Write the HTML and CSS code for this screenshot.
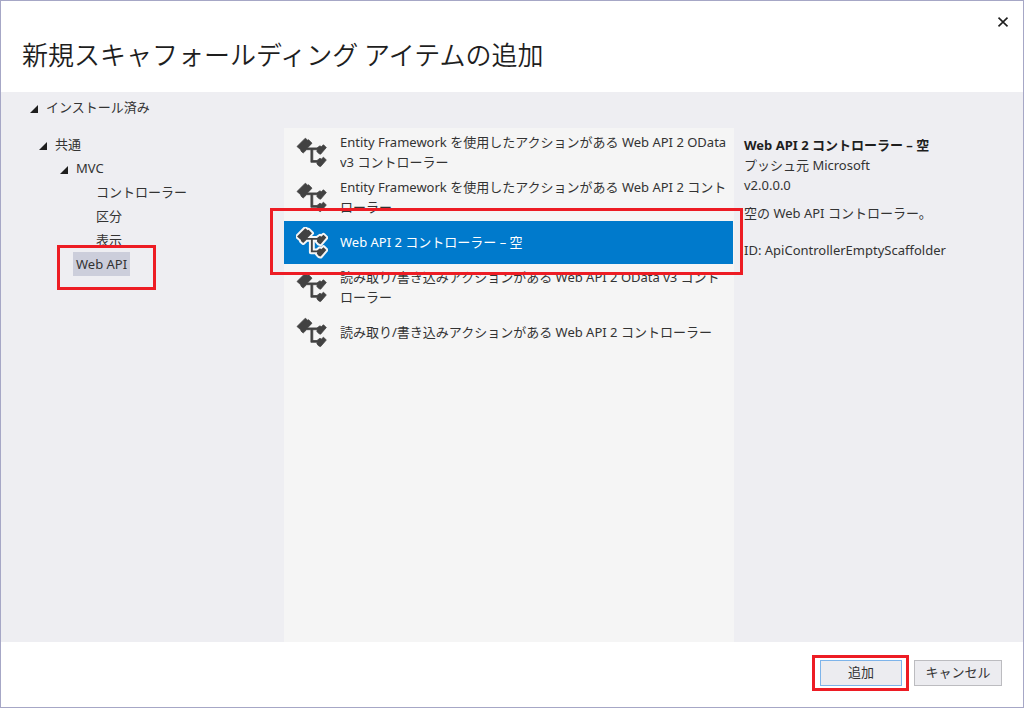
FILE: index.html
```html
<!DOCTYPE html>
<html lang="ja">
<head>
    <meta charset="UTF-8">
    <meta name="viewport" content="width=device-width, initial-scale=1.0">
    <title>新規スキャフォールディング アイテムの追加</title>
    <link rel="stylesheet" href="styles.css">
</head>
<body>

<svg class="defs" aria-hidden="true">
    <symbol id="arrow" viewBox="0 0 10 10">
        <path d="M9 1V9H1Z"/>
    </symbol>
    <symbol id="controller" viewBox="0 0 32 32">
        <path d="M1 9.5L9.3 1.2L11.6 3.2L12.6 2.8L16 6.2L11.5 10.9H21L24 8.8L25.2 9.8L27.5 7.8L30.3 10.6L24.6 17.2L22.8 16.6L20.9 14.4L21.2 12.7H16.8V23.5H21L24 21.2L25.2 22.2L27.5 20.2L30.3 23L24.6 29.6L22.8 29L20.9 26.8L21.2 25.3H14.9V12.7H10.6L7.2 16L4.9 14L5 13Z"/>
    </symbol>
</svg>

<div class="dialog">
    <header class="header">
        <h1>新規スキャフォールディング アイテムの追加</h1>
        <button class="close" type="button" aria-label="閉じる">
            <svg viewBox="0 0 12 10"><path d="M1.5 0.7L10.5 9.3M10.5 0.7L1.5 9.3"/></svg>
        </button>
    </header>

    <main class="content">
        <nav class="tree">
            <button class="node root" type="button"><svg class="arrow"><use href="#arrow"/></svg>インストール済み</button>
            <ul class="level-1">
                <li>
                    <button class="node" type="button"><svg class="arrow"><use href="#arrow"/></svg>共通</button>
                    <ul class="level-2">
                        <li>
                            <button class="node" type="button"><svg class="arrow"><use href="#arrow"/></svg>MVC</button>
                            <ul class="level-3">
                                <li><button class="node" type="button">コントローラー</button></li>
                                <li><button class="node" type="button">区分</button></li>
                                <li><button class="node" type="button">表示</button></li>
                            </ul>
                        </li>
                        <li><button class="node selected mark mark-tree" type="button">Web API</button></li>
                    </ul>
                </li>
            </ul>
        </nav>

        <section class="list">
            <button class="item" type="button">
                <svg class="icon"><use href="#controller"/></svg>
                <span class="label">Entity Framework を使用したアクションがある Web API 2 OData<br>v3 コントローラー</span>
            </button>
            <button class="item" type="button">
                <svg class="icon"><use href="#controller"/></svg>
                <span class="label">Entity Framework を使用したアクションがある Web API 2 コント<br>ローラー</span>
            </button>
            <button class="item active mark mark-item" type="button">
                <svg class="icon"><use href="#controller"/></svg>
                <span class="label">Web API 2 コントローラー – 空</span>
            </button>
            <button class="item" type="button">
                <svg class="icon"><use href="#controller"/></svg>
                <span class="label">読み取り/書き込みアクションがある Web API 2 OData v3 コント<br>ローラー</span>
            </button>
            <button class="item" type="button">
                <svg class="icon"><use href="#controller"/></svg>
                <span class="label">読み取り/書き込みアクションがある Web API 2 コントローラー</span>
            </button>
        </section>

        <aside class="info">
            <h2>Web API 2 コントローラー – 空</h2>
            <p>プッシュ元 Microsoft</p>
            <p>v2.0.0.0</p>
            <p class="description">空の Web API コントローラー。</p>
            <p class="id">ID: ApiControllerEmptyScaffolder</p>
        </aside>
    </main>

    <footer class="footer">
        <button class="btn primary mark mark-btn" type="button">追加</button>
        <button class="btn" type="button">キャンセル</button>
    </footer>
</div>

</body>
</html>
```

FILE: styles.css
```css
* {
    box-sizing: border-box;
}
body {
    margin: 0;
    font-family: "Noto Sans", "Noto Sans CJK JP", sans-serif;
    font-size: 13px;
    line-height: 20px;
    color: #333;
}
button {
    font: inherit;
    color: inherit;
    background: none;
    border: none;
    padding: 0;
    cursor: pointer;
}
h1, h2, p, ul {
    margin: 0;
    padding: 0;
}
ul {
    list-style: none;
}
.defs {
    display: none;
}
.dialog {
    display: flex;
    flex-direction: column;
    min-height: 100vh;
    background-color: #fff;
    border: 1px solid #a6a7c6;
}

/* Header */
.header {
    display: flex;
    justify-content: space-between;
    align-items: flex-start;
    padding: 16px 14px 20px 21px;
}
h1 {
    padding-top: 18px;
    font-family: "Noto Sans CJK JP", sans-serif;
    font-size: 26px;
    font-weight: 350;
    line-height: 37px;
    color: #1e1e1e;
}
.close {
    display: flex;
    padding: 0;
}
.close svg {
    width: 12px;
    height: 10px;
    fill: none;
    stroke: #1e1e1e;
    stroke-width: 1.6;
}

/* Content */
.content {
    flex: 1;
    display: grid;
    grid-template-columns: 283px minmax(0, 1fr) 289px;
    background-color: #eeeef2;
}

/* Tree */
.tree {
    padding: 3px 0 0 25px;
}
.node {
    display: flex;
    align-items: center;
    gap: 7px;
    height: 24px;
    padding: 0 3px;
    white-space: nowrap;
}
.root {
    margin-bottom: 13px;
}
.arrow {
    width: 10px;
    height: 10px;
    margin-top: 3px;
    fill: #1e1e1e;
}
.level-1 {
    padding-left: 9px;
}
.level-2 {
    padding-left: 21px;
}
.level-3 {
    padding-left: 37px;
}
.level-2 > li > .selected {
    margin-left: 17px;
}
.selected {
    background-color: #cccedb;
}

/* Template list */
.list {
    display: flex;
    flex-direction: column;
    gap: 2px;
    margin-top: 36px;
    padding: 3px 1px 0 0;
    background-color: #f5f5f5;
}
.item {
    display: flex;
    align-items: center;
    gap: 12px;
    min-height: 43px;
    padding: 0 0 0 12px;
    text-align: left;
}
.label {
    flex: 1;
    padding-bottom: 2px;
    overflow: hidden;
    white-space: nowrap;
}
.icon {
    flex: none;
    width: 32px;
    height: 32px;
    fill: #424242;
    stroke: #424242;
    stroke-width: 0.8;
    overflow: visible;
}
.active {
    color: #fff;
    background-color: #007acc;
}
.active .icon {
    stroke: #f5f5f5;
    stroke-width: 4;
    stroke-linejoin: round;
    paint-order: stroke;
}

/* Details */
.info {
    padding: 43px 10px 0;
}
h2 {
    font-size: 13px;
    font-weight: bold;
    color: #1e1e1e;
}
.description {
    margin-top: 8px;
}
.id {
    margin-top: 17px;
}

/* Footer */
.footer {
    display: flex;
    justify-content: flex-end;
    gap: 12px;
    padding: 18px 21px 21px;
}
.btn {
    min-width: 88px;
    height: 26px;
    padding-bottom: 2px;
    background-color: #ececf0;
    border: 1px solid #bcbcc0;
}
.primary {
    min-width: 82px;
    border-color: #7eb4ea;
}

/* Red frames around the steps to follow */
.mark {
    position: relative;
}
.mark::after {
    content: "";
    position: absolute;
    z-index: 1;
    border: 3px solid #ed1c24;
    pointer-events: none;
}
.mark-tree::after {
    inset: -7px -26px -14px -16px;
}
.mark-item::after {
    inset: -13px -10px -11px -14px;
}
.mark-btn::after {
    inset: -6px -8px -6px -9px;
}
```
